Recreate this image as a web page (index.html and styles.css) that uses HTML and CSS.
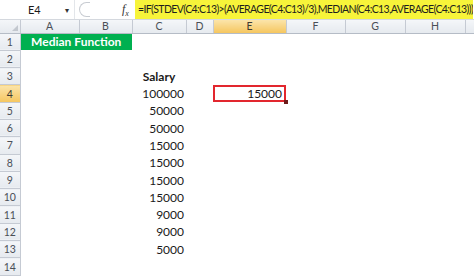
FILE: index.html
```html
<!DOCTYPE html>
<html lang="en">
<head>
    <meta charset="UTF-8">
    <title>Median Function</title>
    <link rel="stylesheet" href="styles.css">
</head>
<body>
    <!-- Formula bar -->
    <div class="formula-bar">
        <div class="name-box">
            <span class="cell-ref">E4</span>
            <span class="drop">&#9662;</span>
        </div>
        <div class="splitter"></div>
        <div class="fx"><i>f</i><sub>x</sub></div>
        <div class="formula">=IF(STDEV(C4:C13)&gt;(AVERAGE(C4:C13)/3),MEDIAN(C4:C13,AVERAGE(C4:C13)))</div>
    </div>

    <!-- Sheet -->
    <table class="sheet">
        <colgroup>
            <col class="w-head">
            <col class="w-a"><col class="w-b"><col class="w-c"><col class="w-d">
            <col class="w-e"><col class="w-f"><col class="w-g"><col class="w-h"><col class="w-i">
        </colgroup>
        <tr class="col-heads">
            <th class="corner"><span class="tri"></span></th>
            <th>A</th><th>B</th><th>C</th><th>D</th>
            <th class="sel">E</th><th>F</th><th>G</th><th>H</th><th></th>
        </tr>
        <tr>
            <th>1</th>
            <td colspan="2" class="title">Median Function</td>
            <td></td><td></td><td></td><td></td><td></td><td></td><td></td>
        </tr>
        <tr><th>2</th><td></td><td></td><td></td><td></td><td></td><td></td><td></td><td></td><td></td></tr>
        <tr><th>3</th><td></td><td></td><td class="bold">Salary</td><td></td><td></td><td></td><td></td><td></td><td></td></tr>
        <tr>
            <th class="sel">4</th><td></td><td></td><td class="num">100000</td><td></td>
            <td class="num active"><div class="active-box">15000<span class="handle"></span></div></td>
            <td></td><td></td><td></td><td></td>
        </tr>
        <tr><th>5</th><td></td><td></td><td class="num">50000</td><td></td><td></td><td></td><td></td><td></td><td></td></tr>
        <tr><th>6</th><td></td><td></td><td class="num">50000</td><td></td><td></td><td></td><td></td><td></td><td></td></tr>
        <tr><th>7</th><td></td><td></td><td class="num">15000</td><td></td><td></td><td></td><td></td><td></td><td></td></tr>
        <tr><th>8</th><td></td><td></td><td class="num">15000</td><td></td><td></td><td></td><td></td><td></td><td></td></tr>
        <tr><th>9</th><td></td><td></td><td class="num">15000</td><td></td><td></td><td></td><td></td><td></td><td></td></tr>
        <tr><th>10</th><td></td><td></td><td class="num">15000</td><td></td><td></td><td></td><td></td><td></td><td></td></tr>
        <tr><th>11</th><td></td><td></td><td class="num">9000</td><td></td><td></td><td></td><td></td><td></td><td></td></tr>
        <tr><th>12</th><td></td><td></td><td class="num">9000</td><td></td><td></td><td></td><td></td><td></td><td></td></tr>
        <tr><th>13</th><td></td><td></td><td class="num">5000</td><td></td><td></td><td></td><td></td><td></td><td></td></tr>
        <tr><th>14</th><td></td><td></td><td></td><td></td><td></td><td></td><td></td><td></td><td></td></tr>
    </table>
</body>
</html>
```

FILE: styles.css
```css
:root {
    --head-border: #c5cad3;
    --head-text: #4a4f57;
    --green: #00b050;
    --sel-red: #e2262e;
    --formula-yellow: #f7f43a;
}

body {
    margin: 0;
    font-family: 'Lato', 'Open Sans', sans-serif;
    background: #ffffff;
    color: #1a1a1a;
    overflow: hidden;
}

/* Formula bar */
.formula-bar {
    display: flex;
    align-items: stretch;
    height: 19px;
    border-bottom: 1px solid #d4d8de;
    background: #ffffff;
}

.name-box {
    width: 74px;
    display: flex;
    align-items: center;
    border-right: 1px solid #e3e6ea;
    font-size: 11px;
}

.cell-ref {
    margin-left: 28px;
}

.drop {
    margin-left: 24px;
    font-size: 8px;
    color: #333333;
}

.splitter {
    width: 10px;
    margin: 2px 0 2px 4px;
    border: 1px solid #c8ccd2;
    border-right: none;
    border-radius: 9px 0 0 9px;
}

.fx {
    margin-left: 32px;
    width: 13px;
    font-family: 'Liberation Serif', serif;
    font-size: 12px;
    line-height: 19px;
    color: #333333;
}

.fx sub {
    font-size: 8px;
    font-style: italic;
}

.formula {
    width: 335px;
    padding-left: 3px;
    background: var(--formula-yellow);
    font-size: 10.5px;
    letter-spacing: -0.62px;
    line-height: 19px;
    white-space: nowrap;
    color: #1d1d1d;
    overflow: hidden;
}

/* Sheet */
.sheet {
    border-collapse: collapse;
    table-layout: fixed;
    width: 474px;
}

.w-head { width: 20px; }
.w-a { width: 59px; }
.w-b { width: 53px; }
.w-c { width: 54px; }
.w-d { width: 27px; }
.w-e { width: 73px; }
.w-f { width: 59px; }
.w-g { width: 60px; }
.w-h { width: 60px; }
.w-i { width: 9px; }

.sheet tr {
    height: 17.3px;
}

.sheet td {
    padding: 0 2px;
    font-size: 12px;
    white-space: nowrap;
}

.sheet th {
    padding: 0;
    font-weight: normal;
    font-size: 10.5px;
    color: var(--head-text);
    background: linear-gradient(#f4f6f9, #e6eaef);
    border: 1px solid var(--head-border);
    border-top: none;
    border-left: none;
}

.sheet tr.col-heads {
    height: 13px;
}

.col-heads th {
    border-top: none;
    border-bottom: 1px solid #b5bcc6;
    line-height: 12px;
}

.col-heads th:last-child {
    border-right: none;
}

.sheet th.sel {
    background: linear-gradient(#fbe4aa, #f5c65f);
    color: #3d3a33;
}

.corner {
    position: relative;
}

.tri {
    position: absolute;
    right: 2px;
    bottom: 2px;
    width: 0;
    height: 0;
    border-left: 6px solid transparent;
    border-bottom: 6px solid #c3c8cf;
}

.title {
    background: var(--green);
    color: #ffffff;
    font-weight: bold;
    font-size: 13px;
    text-align: center;
}

.bold {
    font-weight: bold;
    text-align: center;
}

.num {
    text-align: right;
}

.sheet td.active {
    padding: 0;
}

.active-box {
    position: relative;
    height: 13px;
    line-height: 13px;
    padding-right: 2px;
    border: 2px solid var(--sel-red);
}

.handle {
    position: absolute;
    right: -4px;
    bottom: -4px;
    width: 4px;
    height: 4px;
    background: #6b1a1a;
}
```
